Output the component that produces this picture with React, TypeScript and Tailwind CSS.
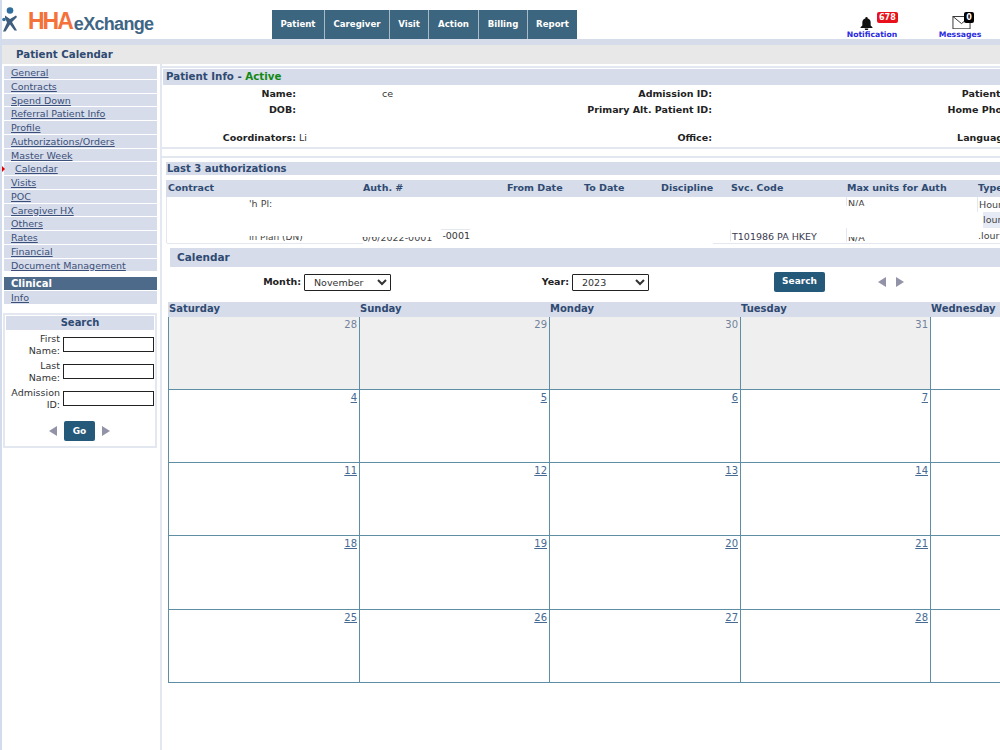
const nav = ["General", "Contracts", "Spend Down", "Referral Patient Info", "Profile", "Authorizations/Orders", "Master Week", "Calendar", "Visits", "POC", "Caregiver HX", "Others", "Rates", "Financial", "Document Management"];
const menu = [
  ["Patient", "w-[53px]"],
  ["Caregiver", "w-[65px]"],
  ["Visit", "w-[39px]"],
  ["Action", "w-[50px]"],
  ["Billing", "w-[49px]"],
  ["Report", "w-[49px]"],
];
const authCols = ["Contract", "Auth. #", "From Date", "To Date", "Discipline", "Svc. Code", "Max units for Auth", "Type"];
const authGrid = "grid grid-cols-[195px_144px_77px_77px_70px_116px_131px_200px]";
const days = ["Saturday", "Sunday", "Monday", "Tuesday", "Wednesday"];
const weeks = [
  ["28", "29", "30", "31", "1"],
  ["4", "5", "6", "7", "8"],
  ["11", "12", "13", "14", "15"],
  ["18", "19", "20", "21", "22"],
  ["25", "26", "27", "28", "29"],
];

function Arrow({ left }: { left?: boolean }) {
  return (
    <svg width="8" height="10" viewBox="0 0 8 10" className="shrink-0">
      <path d={left ? "M8 0v10L0 5z" : "M0 0v10l8-5z"} fill="#9293a8" />
    </svg>
  );
}

function Logo() {
  return (
    <div className="flex items-center w-[270px] h-[39px] shrink-0 pt-[3px]">
      <svg width="17" height="25" viewBox="0 0 17 25" className="ml-[0px] mr-[9px] mb-[3px]">
        <circle cx="8" cy="3.500" r="3.300" fill="#2f6e9e" />
        <circle cx="2" cy="12.500" r="1.800" fill="#2f6e9e" />
        <path d="M3 8.500l5 3.500 6-3.500 1 1.500-5 5 5 8.500h-2.500L8 17.500 3.500 24.500H1l4-9L3 11z" fill="#3f5d7c" />
      </svg>
      <span className="font-['Liberation_Sans',sans-serif] font-bold text-[23px] leading-none tracking-[-2px] text-[#f4713a]">HHA</span>
      <span className="font-['Liberation_Sans',sans-serif] font-bold text-[18px] leading-none tracking-[-0.7px] text-[#3f6685] mt-[5px] ml-[2px]">eXchange</span>
    </div>
  );
}

function Info({ label, value, width }: { label: string; value?: string; width: string }) {
  return (
    <div className={`${width} flex`}>
      <span className="w-full text-right font-bold text-[#222] whitespace-nowrap">{label}</span>
      {value && <span className="absolute ml-[3px] left-full">{value}</span>}
    </div>
  );
}

export default function App() {
  return (
    <div className="w-[1000px] h-[750px] overflow-hidden bg-white border-l-2 border-[#d3dcec] font-['DejaVu_Sans',sans-serif] text-[9.500px] text-[#333]">
      <header className="flex h-[39px]">
        <Logo />
        <nav className="flex mt-[10px] h-[29px] shrink-0">
          {menu.map(([name, width]) => (
            <div key={name} className={`${width} flex items-center justify-center bg-[#3c657f] border-r border-[#a9bac6] last:border-r-0 text-white font-bold text-[8.600px]`}>
              {name}
            </div>
          ))}
        </nav>
        <div className="relative w-[60px] ml-[265px] shrink-0 flex flex-col items-center pt-[16px] text-[#2a2ae0] font-bold text-[7.700px] leading-none">
          <svg width="15" height="15" viewBox="0 0 24 24" className="ml-[-12px]">
            <path d="M12 1.500a2 2 0 0 1 2 2v.8A7 7 0 0 1 19 11v5l3 3v1H2v-1l3-3v-5a7 7 0 0 1 5-6.700v-.8a2 2 0 0 1 2-2zM9 21h6a3 3 0 0 1-6 0z" fill="#111" />
          </svg>
          <span className="mt-[1px] whitespace-nowrap">Notification</span>
          <span className="absolute left-[35px] top-[12px] h-[11px] px-[2px] bg-[#e8101a] rounded-[2px] text-white text-[8px] flex items-center">678</span>
        </div>
        <div className="relative w-[60px] ml-[28px] shrink-0 flex flex-col items-center pt-[16px] text-[#2a2ae0] font-bold text-[7.700px] leading-none">
          <svg width="19" height="14" viewBox="0 0 19 14" className="mb-[1px] mr-[-3px]">
            <rect x="0.500" y="0.500" width="18" height="13" fill="#fff" stroke="#333" />
            <path d="M0.500 0.500L9.500 8l9-7.500" fill="none" stroke="#333" />
          </svg>
          <span className="mt-[1px]">Messages</span>
          <span className="absolute left-[34px] top-[12px] h-[11px] w-[10px] bg-black rounded-[2px] text-white text-[8px] flex items-center justify-center">0</span>
        </div>
      </header>
      <div className="h-[6px] bg-[#d6dce9]" />
      <div className="h-[19px] bg-[#e8e8e8] pl-[14px] flex items-center font-bold text-[10.250px] text-[#2f4a72]">Patient Calendar</div>

      <div className="flex h-[686px]">
        <aside className="w-[158px] shrink-0 pl-[2px] pt-[2px]">
          <div className="w-[153px] flex flex-col">
            {nav.map((item) => (
              <div key={item} className="relative h-[13.750px] border-b border-white bg-[#d6dce9] pl-[7px] leading-[14px] underline text-[#3a4f7a]">
                {item === "Calendar" && <span className="absolute left-[-2px] top-[4px] border-y-[3px] border-l-[3px] border-y-transparent border-l-[#e00000]" />}
                <span className={item === "Calendar" ? "pl-[4px]" : ""}>{item}</span>
              </div>
            ))}
          </div>
          <div className="w-[153px] mt-[5px] h-[13px] bg-[#4e6a8a] pl-[7px] leading-[13px] text-white font-bold text-[10px]">Clinical</div>
          <div className="w-[153px] mt-[1px] h-[13px] bg-[#d6dce9] pl-[7px] leading-[14px] underline text-[#3a4f7a]">Info</div>
          <div className="w-[154px] -ml-[1px] mt-[9px] h-[135px] border-2 border-[#e3e7f0] px-[1px] pt-[1px]">
            <div className="h-[14px] bg-[#d6dce9] text-center font-bold text-[#2f4a72] leading-[14px] text-[10px]">Search</div>
            <div className="flex flex-col gap-[2px] mt-[2px]">
              {[["First", "Name:"], ["Last", "Name:"], ["Admission", "ID:"]].map(([a, b]) => (
                <div key={a} className="flex items-center h-[25px]">
                  <div className="w-[54px] text-right leading-[12px]">{a}<br />{b}</div>
                  <input className="ml-[3px] w-[91px] h-[15px] border border-[#222] bg-white" />
                </div>
              ))}
            </div>
            <div className="flex items-center justify-center gap-[7px] mt-[10px] ml-[-1px]">
              <Arrow left />
              <div className="w-[31px] h-[20px] bg-[#25597a] rounded-[2px] flex items-center justify-center text-white font-bold text-[9px]">Go</div>
              <Arrow />
            </div>
          </div>
        </aside>

        <main className="w-[1100px] shrink-0 border-l-2 border-[#e3e7f0] pt-[2px]">
          <section className="h-[83px] border-y-2 border-[#e3e7f0] pt-[1px]">
            <div className="h-[16px] ml-[1px] bg-[#d6dce9] pl-[3px] flex items-center font-bold text-[#2f4a72] text-[10.250px]">
              Patient Info -&nbsp;<span className="text-[#118811]">Active</span>
            </div>
            <div className="grid grid-cols-[134px_416px_307px] grid-rows-[16px_28px_16px] mt-[1px] leading-[15px] [&>div]:relative">
              <Info width="w-full" label="Name:" />
              <Info width="w-full" label="Admission ID:" />
              <Info width="w-full" label="Patient ID:" />
              <Info width="w-full" label="DOB:" />
              <Info width="w-full" label="Primary Alt. Patient ID:" />
              <Info width="w-full" label="Home Phone:" />
              <Info width="w-full" label="Coordinators:" value="Li" />
              <Info width="w-full" label="Office:" />
              <Info width="w-full" label="Languages:" />
            </div>
            <span className="relative -top-[59px] left-[220px] text-[#333]">ce</span>
          </section>

          <section className="mt-[7px] border-t-2 border-[#e3e7f0] pt-[4px] pl-[4px]">
            <div className="h-[13px] bg-[#d6dce9] pl-[1px] flex items-center font-bold text-[#2f4a72] text-[10px]">Last 3 authorizations</div>
            <div className={`${authGrid} mt-[5px] h-[17px] bg-[#d6dce9] font-bold text-[#2f4a72]`}>
              {authCols.map((col) => <div key={col} className="pl-[2px] leading-[15px] whitespace-nowrap">{col}</div>)}
            </div>
            <div className="relative h-[46px] border-l border-[#e3e7f0] text-[#444]">
              <div className={`${authGrid} h-[15px]`}>
                <div className="pl-[82px] h-[10px] overflow-hidden leading-[14px]">'h Pl:</div>
                <div /><div /><div /><div /><div />
                <div className="border-l border-[#e3e7f0] pl-[1px] h-[9px] overflow-hidden leading-[13px]">N/A</div>
                <div className="border-l border-[#e3e7f0] pl-[1px] leading-[15px]">Hour</div>
              </div>
              <div className={`${authGrid} h-[16px]`}>
                <div /><div /><div /><div /><div /><div /><div />
                <div className="ml-[6px] bg-[#e6eaf4] leading-[16px]">lour</div>
              </div>
              <div className={`${authGrid} h-[15px]`}>
                <div className="pl-[82px] overflow-hidden h-[14px] text-[9px]"><div className="h-[6px] mt-[8px] overflow-hidden leading-[2px]">in Plan (DN)</div></div>
                <div className="flex items-end h-[14px] overflow-hidden">
                  <span className="h-[5px] overflow-hidden leading-[1px] whitespace-nowrap">6/6/2022-0001</span>
                  <span className="ml-auto mr-[36px] bg-white border-t border-[#e3e7f0] pl-[1px] text-[#333] leading-[12px]">-0001</span>
                </div>
                <div /><div /><div />
                <div className="h-[11px] overflow-hidden leading-[14px] border-l border-[#e3e7f0] pl-[1px] text-[#3a3a50] whitespace-nowrap mt-[2px]">T101986 PA HKEY</div>
                <div className="border-l border-[#e3e7f0] pl-[1px] flex items-end h-[14px] overflow-hidden"><span className="h-[5px] overflow-hidden leading-[1px]">N/A</span></div>
                <div className="pl-[1px] leading-[15px]">.lour</div>
              </div>
              <div className="absolute bottom-[-1px] left-0 w-[196px] h-px bg-[#e3e7f0]" />
              <div className="absolute bottom-[-1px] left-[546px] right-0 h-px bg-[#e3e7f0]" />
            </div>
          </section>

          <div className="mt-[5px] ml-[8px] h-[19px] bg-[#d6dce9] pl-[7px] flex items-center font-bold text-[#2f4a72] text-[10.500px]">Calendar</div>

          <div className="flex items-center h-[20px] mt-[5px] font-bold text-[#222]">
            <span className="ml-[101px] w-[38px] text-right">Month:</span>
            <select defaultValue="November" className="ml-[3px] w-[87px] h-[17px] border border-[#222] bg-white pl-[5px] font-normal text-[9.500px] text-[#333] rounded-[1px]">
              <option>November</option>
            </select>
            <span className="ml-[149px] w-[29px] text-right">Year:</span>
            <select defaultValue="2023" className="ml-[3px] w-[77px] h-[17px] border border-[#222] bg-white pl-[5px] font-normal text-[9.500px] text-[#333] rounded-[1px]">
              <option>2023</option>
            </select>
            <div className="ml-[125px] w-[51px] h-[20px] bg-[#25597a] rounded-[2px] flex items-center justify-center text-white text-[9px]">Search</div>
            <div className="ml-[53px] flex gap-[10px] items-center">
              <Arrow left />
              <Arrow />
            </div>
          </div>

          <div className="ml-[6px] mt-[10px] w-[1000px]">
            <div className="grid grid-cols-[191px_190px_191px_190px_191px] h-[15px] bg-[#d6dce9] font-bold text-[#2f4a72] text-[10px] leading-[14px]">
              {days.map((day) => <div key={day} className="pl-[1px]">{day}</div>)}
            </div>
            <div className="grid grid-cols-[191px_190px_191px_190px_191px] grid-rows-[73px_73px_73px_74px_73px]">
              {weeks.map((week, w) =>
                week.map((day, d) => {
                  const past = w === 0 && d < 4;
                  return (
                    <div key={`${w}-${d}`} className={`border-l border-b border-[#5e8ea3] text-right pr-[2px] pt-[1px] text-[10px] leading-[14px] ${past ? "bg-[#efefef] text-[#71829c] border-b-[#5e8ea3]" : "text-[#466a92] underline"}`}>
                      {day}
                    </div>
                  );
                })
              )}
            </div>
          </div>
        </main>
      </div>
    </div>
  );
}
